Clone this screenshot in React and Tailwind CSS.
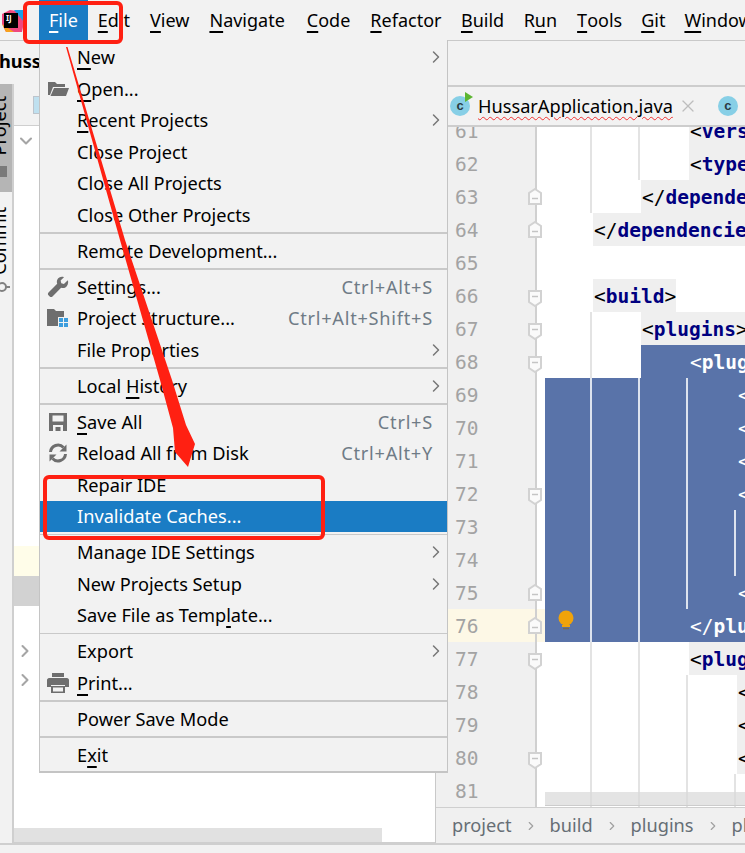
import { ChevronRight, ChevronDown, X } from 'lucide-react';

const ui = "font-['Noto_Sans','Open_Sans',sans-serif]";

const menuBar = [
  ['E', 'dit', 'px-[10px]'],
  ['V', 'iew', 'px-[10px]'],
  ['N', 'avigate', 'pl-[10px] pr-[11px]'],
  ['C', 'ode', 'pl-[11px] pr-[10px]'],
  ['R', 'efactor', 'px-[10px]'],
  ['B', 'uild', 'px-[9.5px]'],
];

// before / mnemonic / after, so the underlined letter stays real text
const menu = [
  { pre: '', key: 'N', post: 'ew', arrow: true },
  { pre: '', key: 'O', post: 'pen...', icon: 'folder' },
  { pre: '', key: 'R', post: 'ecent Projects', arrow: true },
  { pre: 'Close Project' },
  { pre: 'Close All Projects' },
  { pre: 'Close Other Projects' },
  { sep: true },
  { pre: 'Remote Development...' },
  { sep: true },
  { pre: 'Se', key: 't', post: 'tings...', icon: 'wrench', hint: 'Ctrl+Alt+S' },
  { pre: 'Project Structure...', icon: 'structure', hint: 'Ctrl+Alt+Shift+S' },
  { pre: 'File Properties', arrow: true },
  { sep: true },
  { pre: 'Local ', key: 'H', post: 'istory', arrow: true },
  { sep: true },
  { pre: '', key: 'S', post: 'ave All', icon: 'save', hint: 'Ctrl+S' },
  { pre: 'Reload All from Disk', icon: 'reload', hint: 'Ctrl+Alt+Y' },
  { pre: 'Repair IDE' },
  { pre: 'Invalidate Caches...', active: true },
  { sep: true },
  { pre: 'Manage IDE Settings', arrow: true },
  { pre: 'New Projects Setup', arrow: true },
  { pre: 'Save File as Temp', key: 'l', post: 'ate...' },
  { sep: true },
  { pre: 'Export', arrow: true },
  { pre: '', key: 'P', post: 'rint...', icon: 'print' },
  { sep: true },
  { pre: 'Power Save Mode' },
  { sep: true },
  { pre: 'E', key: 'x', post: 'it' },
];

const rows = [
  { n: 61, bg: 'ml-[144px] pl-[1px]', code: ['<', 'version', '>'] },
  { n: 62, bg: 'ml-[144px] pl-[1px]', code: ['<', 'type', '>'] },
  { n: 63, bg: 'ml-[96px] pl-[1px]', code: ['</', 'dependency', '>'], fold: 'up' },
  { n: 64, bg: 'ml-[48px] pl-[1px]', code: ['</', 'dependencies', '>'], fold: 'up' },
  { n: 65 },
  { n: 66, bg: 'ml-[48px] pl-[1px]', fit: true, code: ['<', 'build', '>'], fold: 'down' },
  { n: 67, bg: 'ml-[96px] pl-[1px]', code: ['<', 'plugins', '>'], fold: 'down' },
  { n: 68, sel: true, bg: 'ml-[96px] pl-[49px]', code: ['<', 'plugin', '>'], fold: 'down' },
  { n: 69, sel: true, bg: 'pl-[193px]', code: ['<', 'groupId', '>'] },
  { n: 70, sel: true, bg: 'pl-[193px]', code: ['<', 'artifactId', '>'] },
  { n: 71, sel: true, bg: 'pl-[193px]', code: ['<', 'version', '>'] },
  { n: 72, sel: true, bg: 'pl-[193px]', code: ['<', 'configuration', '>'], fold: 'down' },
  { n: 73, sel: true },
  { n: 74, sel: true },
  { n: 75, sel: true, bg: 'pl-[193px]', code: ['</', 'configuration', '>'], fold: 'up' },
  { n: 76, sel: true, caret: true, bg: 'pl-[145px]', code: ['</', 'plugin', '>'], fold: 'up' },
  { n: 77, bg: 'ml-[144px] pl-[1px]', code: ['<', 'plugin', '>'], fold: 'down' },
  { n: 78, bg: 'ml-[192px] pl-[1px]', code: ['<', 'groupId', '>'] },
  { n: 79, bg: 'ml-[192px] pl-[1px]', code: ['<', 'artifactId', '>'] },
  { n: 80, bg: 'ml-[192px] pl-[1px]', code: ['<', 'version', '>'], fold: 'down' },
  { n: 81 },
];

function MenuIcon({ name }) {
  if (name === 'folder') {
    return (
      <svg width="22" height="18" viewBox="0 0 22 18" fill="#6e6e6e">
        <path d="M1 2h7l2 2h8v3H6L3 15H1z" />
        <path d="M7 8h15l-3 8H3.500z" />
      </svg>
    );
  }
  if (name === 'wrench') {
    return (
      <svg width="22" height="22" viewBox="0 0 22 22" fill="#6e6e6e">
        <path d="M20.500 4.500l-3.600 3.400-2.600-.7-.7-2.600L17 1.200c-2.600-.9-5.400 0-6.600 2.300-.7 1.400-.7 3-.2 4.300L1.500 16.400c-.8.800-.8 2 0 2.800l1.200 1.200c.8.800 2 .8 2.800 0l8.600-8.700c1.400.5 3 .4 4.300-.3 2.200-1.300 3.200-4 2.600-6.900z" />
      </svg>
    );
  }
  if (name === 'structure') {
    return (
      <svg width="22" height="20" viewBox="0 0 22 20">
        <path d="M0 1h7l2 2h8v6h-6v9H0z" fill="#6e6e6e" />
        <path d="M12 10h4v4h-4zM17 10h4v4h-4zM12 15h4v4h-4zM17 15h4v4h-4z" fill="#3d9ede" />
      </svg>
    );
  }
  if (name === 'save') {
    return (
      <svg width="20" height="20" viewBox="0 0 20 20" fill="#6e6e6e">
        <path fillRule="evenodd" d="M1 1h18v18H1zM4.500 3.500v6h11v-6zM5 13v6h10v-6zM7.500 15h5v4h-5z" />
      </svg>
    );
  }
  if (name === 'reload') {
    return (
      <svg width="20" height="20" viewBox="0 0 20 20" fill="none" stroke="#6e6e6e" strokeWidth="3">
        <path d="M2.500 9A7.500 7.500 0 0 1 15.500 4.500" />
        <path d="M17.500 11A7.500 7.500 0 0 1 4.500 15.500" />
        <path d="M18.500 1.500v7h-7z" fill="#6e6e6e" stroke="none" />
        <path d="M1.500 18.500v-7h7z" fill="#6e6e6e" stroke="none" />
      </svg>
    );
  }
  return (
    <svg width="22" height="20" viewBox="0 0 22 20" fill="#6e6e6e">
      <path d="M5 0h12v4H5z" />
      <path fillRule="evenodd" d="M2 5h18c1 0 2 1 2 2v7h-4v-2H4v2H0V7c0-1 1-2 2-2z" />
      <path fillRule="evenodd" d="M4 13h14v7H4zM6 14.500v4h10v-4z" />
    </svg>
  );
}

function FoldMark({ dir }) {
  const top = dir === 'down' ? 'top-[11px]' : 'top-[8px]';
  const shape = dir === 'down' ? 'M1 1h12v11l-6 4-6-4z' : 'M7 1l6 4v11H1V5z';
  const bar = dir === 'down' ? 'M4 6.500h6' : 'M4 10.500h6';
  return (
    <svg width="14" height="17" viewBox="0 0 14 17" className={`absolute left-[-8px] ${top}`}>
      <path d={shape} fill="#fafafa" stroke="#d2d2d2" strokeWidth="2" />
      <path d={bar} stroke="#c4c4c4" strokeWidth="1.500" />
    </svg>
  );
}

function Tag({ code, sel }) {
  if (!code) return null;
  return (
    <>
      <span className={sel ? 'font-normal text-white' : 'font-normal text-black'}>{code[0]}</span>
      <span className={sel ? 'text-white' : 'text-[#000080]'}>{code[1]}</span>
      <span className={sel ? 'font-normal text-white' : 'font-normal text-black'}>{code[2]}</span>
    </>
  );
}

function EditorRow({ row }) {
  return (
    <div className="flex h-[33px] overflow-hidden">
      <div className={`w-[101px] shrink-0 border-r-2 border-[#d0d0d0] pl-[19px] pt-[1px] text-[#a3a3a3] leading-[33px] ${row.caret ? 'bg-[#fdf8e6]' : 'bg-[#f0f0f0]'}`}>
        {row.n}
      </div>
      <div className={`relative w-[8px] shrink-0 ${row.caret ? 'bg-[#fdf8e6]' : 'bg-white'}`} />
      <div className="relative flex min-w-0 flex-1 bg-white">
        {row.caret && (
          <svg width="16" height="22" viewBox="0 0 16 22" className="absolute left-[13px] top-[1px] z-10">
            <circle cx="8" cy="8" r="7.500" fill="#f0a30a" />
            <path d="M4 15h8v2H4z" fill="#f0a30a" />
            <path d="M5 18.500h6" stroke="#7a6a4a" strokeWidth="1.500" />
          </svg>
        )}
        <div
          className={`min-w-0 overflow-hidden whitespace-pre pt-[1px] font-bold leading-[33px] ${row.bg || ''} ${row.fit ? 'w-fit' : 'flex-1'} ${
            row.sel ? 'bg-[#5973a9]' : row.code ? 'bg-[#efefef]' : 'bg-white'
          }`}
        >
          <Tag code={row.code} sel={row.sel} />
        </div>
      </div>
    </div>
  );
}

export default function App() {
  return (
    <div className={`relative flex h-[853px] w-[745px] flex-col overflow-hidden bg-[#f2f2f2] text-[18.2px] text-black ${ui}`}>
      {/* Main menu */}
      <header className="flex h-[41px] shrink-0 items-stretch border-b border-[#c9c9c9] text-[18px]">
        <div className="relative ml-[2px] mr-[15px] mt-[8px] h-[24px] w-[22px] shrink-0">
          <svg width="22" height="24" viewBox="0 0 22 24" className="absolute inset-0">
            <path d="M0 6L8 2l14 2v10l-2 10H4L0 16z" fill="#f0487e" />
            <path d="M12 2h10v12z" fill="#1aa0e8" />
            <path d="M0 16l4 8h8z" fill="#f7a11c" />
          </svg>
          <div className="absolute left-[2px] top-[5px] h-[15px] w-[14px] bg-black pl-[2px] text-[8px] font-bold leading-[10px] text-white">
            IJ
          </div>
        </div>
        <div className="flex h-full items-center bg-[#1a7cc4] px-[10px] text-white">
          <u className="decoration-2 underline-offset-[4px]">F</u>ile
        </div>
        {menuBar.map(([k, rest, pad]) => (
          <div key={k} className={`flex items-center whitespace-pre ${pad}`}>
            <u className="decoration-2 underline-offset-[4px]">{k}</u>
            {rest}
          </div>
        ))}
        <div className="flex items-center whitespace-pre px-[10px]">
          R<u className="decoration-2 underline-offset-[4px]">u</u>n
        </div>
        <div className="flex items-center whitespace-pre px-[10px]">
          <u className="decoration-2 underline-offset-[4px]">T</u>ools
        </div>
        <div className="flex items-center whitespace-pre px-[9px]">
          <u className="decoration-2 underline-offset-[4px]">G</u>it
        </div>
        <div className="flex items-center whitespace-pre px-[10px]">
          <u className="decoration-2 underline-offset-[4px]">W</u>indow
        </div>
      </header>

      {/* Navigation bar */}
      <div className="flex h-[43px] shrink-0 items-center pb-[2px]">
        <span className="ml-[-1px] font-bold">hussar</span>
      </div>

      <div className="flex min-h-0 flex-1">
        {/* Tool window stripe */}
        <aside className="w-[14px] shrink-0 overflow-hidden border-r-2 border-[#cfcfcf] bg-[#f2f2f2]">
          <div className="flex h-[108px] w-[12px] flex-col items-end overflow-hidden bg-[#b5b5b5] pt-[12px]">
            <span className="mr-[3px] rotate-180 leading-[20px] [writing-mode:vertical-rl]">Project</span>
            <span className="mt-[11px] h-[11px] w-[7px] self-start bg-[#7a7a7a]" />
          </div>
          <div className="flex w-[12px] flex-col items-end overflow-hidden pt-[15px]">
            <span className="mr-[3px] rotate-180 leading-[20px] [writing-mode:vertical-rl]">Commit</span>
            <svg width="12" height="14" viewBox="0 0 12 14" className="mt-[5px] shrink-0" fill="none" stroke="#808080" strokeWidth="2">
              <circle cx="2" cy="7" r="4" />
              <path d="M6 7h4" />
            </svg>
          </div>
        </aside>

        {/* Project panel */}
        <section className="flex w-[422px] shrink-0 flex-col border-r border-[#c9c9c9] bg-white">
          <div className="flex h-[42px] shrink-0 items-center border-b border-[#cfcfcf] bg-[#f2f2f2] pl-[19px]">
            <span className="h-[18px] w-[8px] border border-[#bcc4cc] bg-[#bfe0ef]" />
          </div>
          <div className="flex h-[30px] items-center pl-[2px]">
            <ChevronDown size={20} strokeWidth={2.5} className="text-[#a5a5a5]" />
          </div>
          <div className="mt-[390px] h-[30px] bg-[#fffde9]" />
          <div className="h-[30px] bg-[#d2d2d2]" />
          <div className="mt-[30px] flex h-[29px] items-center pl-[1px]">
            <ChevronRight size={20} strokeWidth={2.5} className="text-[#a5a5a5]" />
          </div>
          <div className="flex h-[29px] items-center pl-[1px]">
            <ChevronRight size={20} strokeWidth={2.5} className="text-[#a5a5a5]" />
          </div>
          <div className="flex-1" />
          <div className="h-[15px] shrink-0 border-b border-[#cfcfcf] bg-white">
            <div className="h-full w-[368px] bg-[#e1e1e1]" />
          </div>
        </section>

        {/* Editor */}
        <main className="flex min-w-0 flex-1 flex-col">
          <div className="mt-[1px] flex h-[42px] shrink-0 items-center gap-[8px] border-y-2 border-[#cdcdcd] bg-[#f2f2f2] pl-[14px]">
            <div className="relative h-[20px] w-[20px] shrink-0 rounded-full bg-[#87cfe6] text-center font-['Liberation_Sans',sans-serif] text-[13px] font-bold leading-[19px] text-[#2b3a42]">
              c
              <svg width="9" height="10" viewBox="0 0 9 10" className="absolute left-[15px] top-[-4px]">
                <path d="M0 0l8 5-8 5z" fill="#5cb531" />
              </svg>
            </div>
            <span className="mt-[2px] whitespace-nowrap underline decoration-[#f03030] decoration-wavy decoration-1 underline-offset-[3px]">
              HussarApplication.java
            </span>
            <X size={20} strokeWidth={1.5} className="ml-[-3px] shrink-0 text-[#bdbdbd]" />
            <div className="ml-[12px] h-[20px] w-[20px] shrink-0 rounded-full bg-[#87cfe6] text-center font-['Liberation_Sans',sans-serif] text-[13px] font-bold leading-[19px] text-[#2b3a42]">
              c
            </div>
          </div>
          <div className="relative min-h-0 flex-1 overflow-hidden font-['DejaVu_Sans_Mono',monospace] text-[19.5px]">
            <div className="mt-[-13px]">
              {rows.map((row) => (
                <EditorRow key={row.n} row={row} />
              ))}
            </div>
            {/* Fold markers sit on the gutter line */}
            <div className="absolute left-0 top-[-13px] w-[109px]">
              {rows.map((row) => (
                <div key={row.n} className="relative h-[33px]">
                  {row.fold && (
                    <div className="absolute left-[100px] top-0">
                      <FoldMark dir={row.fold} />
                    </div>
                  )}
                </div>
              ))}
            </div>
            {/* Indent guides */}
            <span className="absolute left-[154px] top-0 h-[86px] w-[2px] bg-[#e3e3e3]" />
            <span className="absolute left-[202px] top-0 h-[53px] w-[2px] bg-[#e3e3e3]" />
            <span className="absolute left-[154px] top-[185px] h-[66px] w-[2px] bg-[#e3e3e3]" />
            <span className="absolute left-[154px] top-[251px] h-[264px] w-[2px] bg-[#dde3ee]" />
            <span className="absolute left-[202px] top-[251px] h-[264px] w-[2px] bg-[#dde3ee]" />
            <span className="absolute left-[154px] top-[515px] h-[165px] w-[2px] bg-[#e3e3e3]" />
            <span className="absolute left-[202px] top-[515px] h-[165px] w-[2px] bg-[#e3e3e3]" />
            <span className="absolute left-[250px] top-[251px] h-[231px] w-[2px] bg-[#dde3ee]" />
            <span className="absolute left-[250px] top-[548px] h-[132px] w-[2px] bg-[#e3e3e3]" />
            <span className="absolute left-[298px] top-[383px] h-[66px] w-[2px] bg-[#dde3ee]" />
            <span className="absolute left-[298px] top-[647px] h-[33px] w-[2px] bg-[#e3e3e3]" />
            {/* Horizontal scrollbar */}
            <div className="absolute bottom-[1px] left-[109px] right-0 h-[14px] border-b border-[#cccccc] bg-[#d8d8d8]/70" />
          </div>
          <div className="flex h-[36px] shrink-0 items-center whitespace-nowrap border-t border-[#cfcfcf] bg-[#f0f0f0] pl-[16px] text-[#666e75]">
            <span>project</span>
            <ChevronRight size={14} className="mx-[12px] shrink-0 text-[#a0a0a0]" />
            <span>build</span>
            <ChevronRight size={14} className="mx-[12px] shrink-0 text-[#a0a0a0]" />
            <span>plugins</span>
            <ChevronRight size={14} className="mx-[12px] shrink-0 text-[#a0a0a0]" />
            <span>plugin</span>
          </div>
        </main>
      </div>

      {/* Status bar */}
      <div className="h-[10px] shrink-0 border-t-2 border-[#cfcfcf] bg-[#f2f2f2]" />

      {/* File menu */}
      <nav className="absolute left-[39px] top-[40px] z-20 w-[409px] border border-t-0 border-b-2 border-[#c4c4c4] bg-[#f2f2f2] pt-[1.5px]">
        {menu.map((item, i) =>
          item.sep ? (
            <div key={i} className="my-[1.5px] h-[1.5px] bg-[#c9c9c9]" />
          ) : (
            <div
              key={i}
              className={`relative flex h-[31.5px] items-center whitespace-pre pl-[37px] pr-[14px] ${item.active ? 'bg-[#1a7cc4] text-white' : ''}`}
            >
              {item.icon && (
                <span className="absolute left-[6px] top-0 flex h-full w-[24px] items-center justify-center">
                  <MenuIcon name={item.icon} />
                </span>
              )}
              <span className="pt-[1px]">
                {item.pre}
                {item.key && <u className="decoration-2 underline-offset-[4px]">{item.key}</u>}
                {item.post}
              </span>
              {item.hint && <span className="ml-auto pt-[1px] tracking-[0.75px] text-[#6f7b86]">{item.hint}</span>}
              {item.arrow && (
                <ChevronRight size={20} strokeWidth={1.8} className="absolute right-[1px] text-[#777777]" />
              )}
            </div>
          ),
        )}
      </nav>

      {/* Annotations */}
      <div className="pointer-events-none absolute left-[23px] top-[1px] z-30 h-[43px] w-[100px] rounded-md border-[4px] border-[#ff2012]" />
      <div className="pointer-events-none absolute left-[43px] top-[475px] z-30 h-[65px] w-[282px] rounded-md border-[4px] border-[#ff2012]" />
      <svg width="745" height="853" viewBox="0 0 745 853" className="pointer-events-none absolute left-0 top-0 z-30">
        <path d="M66 47h1.500L125 240l47 140 14 45 9 19-7 23-13-15-2-24-13-48-40-140z" fill="#ff2012" />
      </svg>
    </div>
  );
}
